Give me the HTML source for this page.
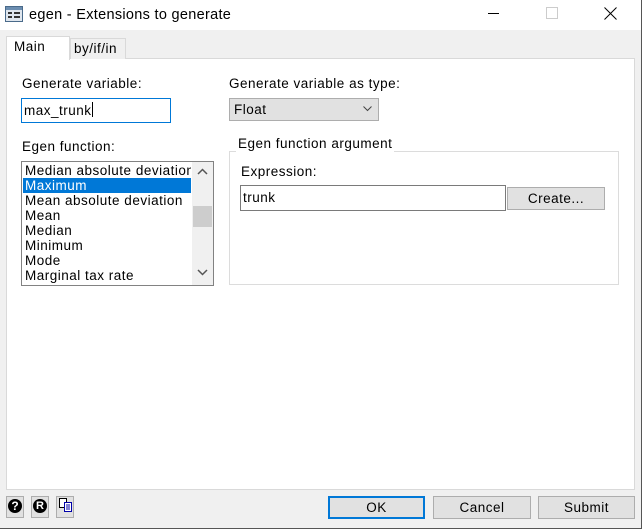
<!DOCTYPE html>
<html><head><style>
*{box-sizing:border-box}
body{margin:0;width:642px;height:529px;background:#f0f0f0;font-family:"Liberation Sans",sans-serif;font-size:13.5px;color:#000;position:relative;overflow:hidden;letter-spacing:0.5px}
.a{position:absolute}
.t{position:absolute;white-space:nowrap;line-height:16px}
.btn{position:absolute;background:#e1e1e1;border:1px solid #adadad;text-align:center;line-height:21px}
</style></head><body>
<div class="a" style="left:0;top:0;width:642px;height:30px;background:#fff"></div>
<svg class="a" style="left:5px;top:6px" width="18" height="16"><rect x="0.5" y="0.5" width="17" height="15" fill="#dfe6ee" stroke="#4a6a8a"/><rect x="1" y="1" width="16" height="3" fill="#6b8db0"/><rect x="3" y="6" width="4" height="2" fill="#333"/><rect x="9" y="6" width="6" height="2" fill="#333"/><rect x="3" y="10" width="4" height="2" fill="#333"/><rect x="9" y="10" width="6" height="2" fill="#333"/></svg>
<div class="t" style="left:29px;top:7px;font-size:14.5px;letter-spacing:0.3px">egen - Extensions to generate</div>
<div class="a" style="left:488px;top:13px;width:11px;height:1px;background:#000"></div>
<div class="a" style="left:546px;top:7px;width:12px;height:12px;border:1px solid #ccc"></div>
<svg class="a" style="left:604px;top:7px" width="13" height="13"><path d="M0.5 0.5L12.5 12.5M12.5 0.5L0.5 12.5" stroke="#000" stroke-width="1"/></svg>
<div class="a" style="left:641px;top:0;width:1px;height:529px;background:#555"></div>
<div class="a" style="left:0;top:528px;width:642px;height:1px;background:#555"></div>
<!-- panel -->
<div class="a" style="left:6px;top:58px;width:629px;height:432px;background:#fff;border:1px solid #d9d9d9"></div>
<div class="a" style="left:70px;top:38px;width:56px;height:21px;background:#f0f0f0;border:1px solid #d9d9d9;border-bottom:none"></div>
<div class="t" style="left:74px;top:41px">by/if/in</div>
<div class="a" style="left:6px;top:36px;width:64px;height:24px;background:#fff;border:1px solid #d9d9d9;border-bottom:none"></div>
<div class="t" style="left:14px;top:39px">Main</div>
<div class="t" style="left:22px;top:76px">Generate variable:</div>
<div class="a" style="left:21px;top:98px;width:150px;height:25px;border:1px solid #0078d7;background:#fff"></div>
<div class="t" style="left:24px;top:102px">max_trunk<span style="display:inline-block;width:1px;height:15px;background:#000;vertical-align:-2px"></span></div>
<div class="t" style="left:229px;top:76px">Generate variable as type:</div>
<div class="a" style="left:229px;top:98px;width:150px;height:23px;background:#e1e1e1;border:1px solid #adadad"></div>
<div class="t" style="left:234px;top:102px">Float</div>
<svg class="a" style="left:363px;top:106px" width="9" height="6"><path d="M0.5 0.5L4.5 4.5L8.5 0.5" stroke="#444" fill="none"/></svg>
<div class="t" style="left:22px;top:139px">Egen function:</div>
<div class="a" style="left:21px;top:161px;width:193px;height:125px;border:1px solid #828282;background:#fff;overflow:hidden">
<div class="a" style="left:1px;top:16px;width:168px;height:15px;background:#0078d7"></div>
<div class="t" style="left:3px;top:1px;line-height:15px;width:166px;overflow:hidden">Median absolute deviation<br><span style="color:#fff">Maximum</span><br>Mean absolute deviation<br>Mean<br>Median<br>Minimum<br>Mode<br>Marginal tax rate</div>
<div class="a" style="left:170px;top:0;width:21px;height:123px;background:#f0f0f0"></div>
<div class="a" style="left:171px;top:44px;width:19px;height:21px;background:#cdcdcd"></div>
<svg class="a" style="left:175px;top:6px" width="11" height="7"><path d="M1 6L5.5 1.5L10 6" stroke="#555" stroke-width="1.5" fill="none"/></svg>
<svg class="a" style="left:175px;top:107px" width="11" height="7"><path d="M1 1L5.5 5.5L10 1" stroke="#555" stroke-width="1.5" fill="none"/></svg>
</div>
<div class="a" style="left:229px;top:151px;width:390px;height:134px;border:1px solid #dcdcdc"></div>
<div class="t" style="left:236px;top:136px;background:#fff;padding:0 2px">Egen function argument</div>
<div class="t" style="left:241px;top:164px">Expression:</div>
<div class="a" style="left:240px;top:185px;width:266px;height:26px;border:1px solid #7a7a7a;background:#fff"></div>
<div class="t" style="left:243px;top:190px">trunk</div>
<div class="btn" style="left:507px;top:187px;width:98px;height:23px">Create...</div>
<!-- bottom -->
<div class="a" style="left:6px;top:496px;width:18px;height:22px;background:#e1e1e1;border:1px solid #adadad"></div>
<div class="a" style="left:31px;top:496px;width:18px;height:22px;background:#e1e1e1;border:1px solid #adadad"></div>
<div class="a" style="left:56px;top:496px;width:18px;height:22px;background:#e1e1e1;border:1px solid #adadad"></div>
<div class="a" style="left:8px;top:499px;width:14px;height:14px;border-radius:50%;background:#000;color:#fff;font-weight:bold;font-size:12px;text-align:center;line-height:14px;letter-spacing:0">?</div>
<div class="a" style="left:33px;top:499px;width:14px;height:14px;border-radius:50%;background:#000;color:#fff;font-weight:bold;font-size:11px;text-align:center;line-height:14px;letter-spacing:0">R</div>
<svg class="a" style="left:59px;top:498px" width="14" height="14"><rect x="0.5" y="0.5" width="7" height="9" fill="#fff" stroke="#000"/><rect x="5.5" y="4.5" width="7" height="9" fill="#fff" stroke="#00a"/><path d="M7 7h4M7 9h4M7 11h4" stroke="#00a"/></svg>
<div class="btn" style="left:328px;top:496px;width:97px;height:23px;border:2px solid #0078d7;line-height:19px">OK</div>
<div class="btn" style="left:433px;top:496px;width:98px;height:23px">Cancel</div>
<div class="btn" style="left:538px;top:496px;width:97px;height:23px">Submit</div>
</body></html>
